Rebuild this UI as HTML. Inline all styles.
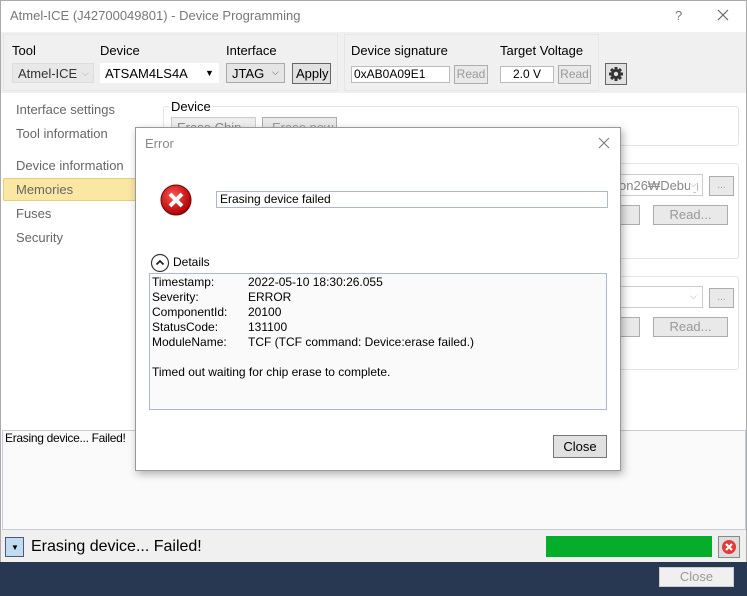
<!DOCTYPE html>
<html><head><meta charset="utf-8"><style>
*{box-sizing:border-box;margin:0;padding:0}
body{width:747px;height:596px;overflow:hidden;background:#fff;font-family:"Liberation Sans","NanumGothic",sans-serif;font-size:12px;color:#000;position:relative}
.a{position:absolute;white-space:nowrap}
.box{position:absolute;border:1px solid #ccc;background:#fff}
.btn{position:absolute;border:1px solid #adadad;background:#e9e9e9;text-align:center;color:#999}
.t{position:absolute;white-space:nowrap;line-height:15px}
</style></head><body>
<div class="a" style="left:0;top:0;width:747px;height:596px;border:1px solid #aaa;border-bottom:none"></div>
<div class="t" style="left:10px;top:8px;color:#777;font-size:13px">Atmel-ICE (J42700049801) - Device Programming</div>
<div class="t" style="left:675px;top:8px;color:#777;font-size:13px">?</div>
<svg class="a" style="left:717px;top:9px" width="12" height="12"><path d="M1 1L11 11M11 1L1 11" stroke="#666" stroke-width="1.2"/></svg>
<div class="a" style="left:1px;top:32px;width:745px;height:61px;background:#f0f0f0"></div>
<div class="a" style="left:3px;top:34px;width:335px;height:57px;border:1px solid #e6e6e6"></div>
<div class="a" style="left:344px;top:34px;width:255px;height:57px;border:1px solid #e6e6e6"></div>
<div class="t" style="left:12px;top:43px;font-size:13px">Tool</div>
<div class="t" style="left:100px;top:43px;font-size:13px">Device</div>
<div class="t" style="left:226px;top:43px;font-size:13px">Interface</div>
<div class="t" style="left:351px;top:43px;font-size:13px">Device signature</div>
<div class="t" style="left:500px;top:43px;font-size:13px">Target Voltage</div>
<div class="box" style="left:12px;top:63px;width:82px;height:20px;background:#e8e8e8;border-color:#ddd"></div>
<div class="t" style="left:18px;top:66px;font-size:13px;color:#333">Atmel-ICE</div>
<div class="t" style="left:82px;top:66px;color:#aaa;font-size:9px">⌵</div>
<div class="box" style="left:100px;top:63px;width:119px;height:20px;border-color:#fff"></div>
<div class="t" style="left:105px;top:66px;font-size:13px">ATSAM4LS4A</div>
<div class="t" style="left:205px;top:66px;font-size:9px">▼</div>
<div class="box" style="left:226px;top:63px;width:59px;height:20px;background:#e5e5e5;border-color:#aaa"></div>
<div class="t" style="left:232px;top:66px;font-size:13px">JTAG</div>
<div class="t" style="left:272px;top:65px;font-size:9px;color:#555">⌵</div>
<div class="box" style="left:292px;top:63px;width:39px;height:21px;background:#e1e1e1;border-color:#666"></div>
<div class="t" style="left:296px;top:66px;font-size:13px">Apply</div>
<div class="box" style="left:351px;top:66px;width:99px;height:17px;border-color:#bbb"></div>
<div class="t" style="left:354px;top:67px;font-size:12px">0xAB0A09E1</div>
<div class="btn" style="left:454px;top:65px;width:34px;height:19px;line-height:17px;font-size:12px">Read</div>
<div class="box" style="left:500px;top:66px;width:54px;height:17px;border-color:#bbb"></div>
<div class="t" style="left:513px;top:67px;font-size:12px">2.0 V</div>
<div class="btn" style="left:558px;top:65px;width:33px;height:19px;line-height:17px;font-size:12px">Read</div>
<div class="box" style="left:605px;top:63px;width:22px;height:22px;background:#e1e1e1;border-color:#666"></div>
<svg class="a" style="left:608px;top:66px" width="16" height="16" viewBox="0 0 16 16"><g fill="#333"><circle cx="8" cy="8" r="5"/><rect x="6.5" y="1" width="3" height="14"/><rect x="1" y="6.5" width="14" height="3"/><rect x="6.5" y="1" width="3" height="14" transform="rotate(45 8 8)"/><rect x="6.5" y="1" width="3" height="14" transform="rotate(-45 8 8)"/></g><circle cx="8" cy="8" r="2.2" fill="#e1e1e1"/></svg>
<div class="t" style="left:16px;top:102px;color:#666;font-size:13px">Interface settings</div>
<div class="t" style="left:16px;top:126px;color:#666;font-size:13px">Tool information</div>
<div class="t" style="left:16px;top:158px;color:#666;font-size:13px">Device information</div>
<div class="a" style="left:3px;top:178px;width:150px;height:23px;background:#fbe7a4;border:1px solid #e9cd78;border-radius:2px"></div>
<div class="t" style="left:16px;top:182px;color:#666;font-size:13px">Memories</div>
<div class="t" style="left:16px;top:206px;color:#666;font-size:13px">Fuses</div>
<div class="t" style="left:16px;top:230px;color:#666;font-size:13px">Security</div>
<div class="a" style="left:163px;top:106px;width:576px;height:40px;border:1px solid #e4e4e4;border-radius:3px"></div>
<div class="t" style="left:169px;top:99px;background:#fff;padding:0 2px;font-size:13px">Device</div>
<div class="box" style="left:171px;top:117px;width:85px;height:20px;background:#eee;border-color:#ccc"></div>
<div class="t" style="left:177px;top:120px;color:#888;font-size:13px">Erase Chip</div>
<div class="btn" style="left:262px;top:117px;width:75px;height:20px"></div>
<div class="t" style="left:272px;top:120px;color:#999;font-size:13px">Erase now</div>
<div class="a" style="left:163px;top:163px;width:576px;height:96px;border:1px solid #e4e4e4;border-radius:3px"></div>
<div class="box" style="left:560px;top:174px;width:143px;height:22px;border-color:#ccc;overflow:hidden"><div class="t" style="left:58px;top:3px;color:#888;font-size:13px">on26₩Debug</div></div>
<div class="t" style="left:690px;top:177px;color:#aaa;font-size:9px;background:#fff">⌵</div>
<div class="btn" style="left:709px;top:176px;width:25px;height:20px;font-size:10px;line-height:18px">...</div>
<div class="btn" style="left:580px;top:205px;width:60px;height:20px"></div>
<div class="btn" style="left:653px;top:205px;width:75px;height:20px;font-size:13px;line-height:18px">Read...</div>
<div class="a" style="left:163px;top:276px;width:576px;height:94px;border:1px solid #e4e4e4;border-radius:3px"></div>
<div class="box" style="left:560px;top:286px;width:143px;height:22px;border-color:#ccc"></div>
<div class="t" style="left:690px;top:289px;color:#aaa;font-size:9px">⌵</div>
<div class="btn" style="left:709px;top:288px;width:25px;height:20px;font-size:10px;line-height:18px">...</div>
<div class="btn" style="left:580px;top:317px;width:60px;height:20px"></div>
<div class="btn" style="left:653px;top:317px;width:75px;height:20px;font-size:13px;line-height:18px">Read...</div>
<div class="a" style="left:2px;top:430px;width:744px;height:100px;background:#fafafa;border:1px solid #c8ccd8"></div>
<div class="t" style="left:5px;top:431px;font-size:12px;letter-spacing:-0.3px">Erasing device... Failed!</div>
<div class="a" style="left:1px;top:530px;width:745px;height:32px;background:#f0f0f0"></div>
<div class="a" style="left:5px;top:537px;width:19px;height:20px;background:#bfdcf0;border:1px solid #557"></div>
<div class="t" style="left:11px;top:540px;font-size:8px">▼</div>
<div class="t" style="left:31px;top:538px;font-size:16px;line-height:18px">Erasing device... Failed!</div>
<div class="a" style="left:546px;top:536px;width:166px;height:21px;background:#05ae2a"></div>
<div class="a" style="left:718px;top:536px;width:22px;height:22px;background:#ddd;border:1px solid #888"></div>
<svg class="a" style="left:721px;top:539px" width="16" height="16"><circle cx="8" cy="8" r="7" fill="#e23a3a"/><path d="M5 5L11 11M11 5L5 11" stroke="#fff" stroke-width="2.2"/></svg>
<div class="a" style="left:0;top:562px;width:747px;height:34px;background:#283752"></div>
<div class="a" style="left:659px;top:567px;width:75px;height:20px;background:#f0f0f0;border:1px solid #ccc;color:#999;text-align:center;font-size:13px;line-height:18px">Close</div>
<div class="a" style="left:135px;top:127px;width:486px;height:344px;background:#fff;border:1px solid #999;box-shadow:2px 3px 8px rgba(0,0,0,.3)"></div>
<div class="t" style="left:145px;top:136px;color:#888;font-size:13px">Error</div>
<svg class="a" style="left:598px;top:137px" width="12" height="12"><path d="M1 1L11 11M11 1L1 11" stroke="#777" stroke-width="1"/></svg>
<svg class="a" style="left:159px;top:183px" width="34" height="34"><defs><radialGradient id="g" cx="40%" cy="35%" r="65%"><stop offset="0" stop-color="#f55"/><stop offset="1" stop-color="#a00"/></radialGradient></defs><circle cx="17" cy="17" r="15" fill="url(#g)" stroke="#700" stroke-width="1"/><path d="M11 11L23 23M23 11L11 23" stroke="#fff" stroke-width="4"/></svg>
<div class="a" style="left:216px;top:191px;width:392px;height:17px;border:1px solid #aeb8cc;background:#fff"></div>
<div class="t" style="left:220px;top:192px;font-size:12px">Erasing device failed</div>
<svg class="a" style="left:150px;top:253px" width="20" height="20"><circle cx="10" cy="10" r="8.5" fill="#fff" stroke="#333" stroke-width="1.2"/><path d="M6.5 11.5L10 8L13.5 11.5" fill="none" stroke="#222" stroke-width="1.8"/></svg>
<div class="t" style="left:173px;top:255px;font-size:12px">Details</div>
<div class="a" style="left:149px;top:273px;width:458px;height:137px;background:#fafafa;border:1px solid #aeb8cc"></div>
<div class="t" style="left:152px;top:275px">Timestamp:</div><div class="t" style="left:248px;top:275px">2022-05-10 18:30:26.055</div>
<div class="t" style="left:152px;top:290px">Severity:</div><div class="t" style="left:248px;top:290px">ERROR</div>
<div class="t" style="left:152px;top:305px">ComponentId:</div><div class="t" style="left:248px;top:305px">20100</div>
<div class="t" style="left:152px;top:320px">StatusCode:</div><div class="t" style="left:248px;top:320px">131100</div>
<div class="t" style="left:152px;top:335px">ModuleName:</div><div class="t" style="left:248px;top:335px">TCF (TCF command: Device:erase failed.)</div>
<div class="t" style="left:152px;top:365px">Timed out waiting for chip erase to complete.</div>
<div class="a" style="left:553px;top:435px;width:54px;height:23px;background:#e1e1e1;border:1px solid #777;text-align:center;font-size:13px;line-height:21px">Close</div>
</body></html>
